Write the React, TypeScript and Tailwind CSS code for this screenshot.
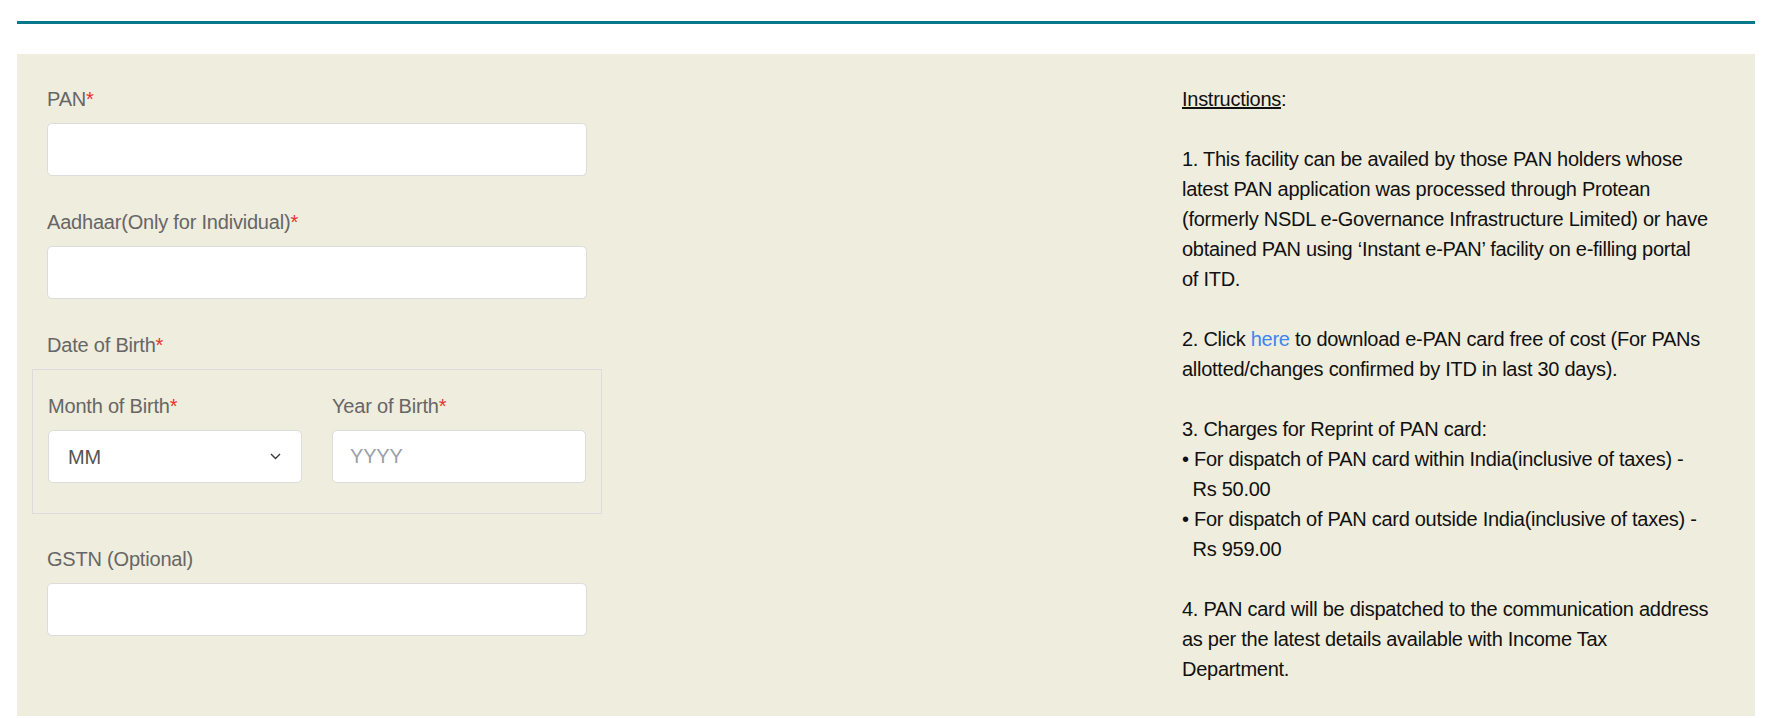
import React from "react";

const FONT = { fontFamily: '"Liberation Sans", Arial, sans-serif' };

function Label({ text, required }: { text: string; required?: boolean }) {
  return (
    <label className="block text-[20px] leading-[30px] tracking-[-0.2px] text-[#666666] mb-[9px]">
      {text}
      {required && <span className="text-[#e8322e]">*</span>}
    </label>
  );
}

function TextInput({ placeholder }: { placeholder?: string }) {
  return (
    <input
      type="text"
      placeholder={placeholder}
      className="block w-full h-[53px] bg-white border border-[#dcdcdc] rounded-[5px] pl-[17px] text-[20px] tracking-[-0.2px] text-[#555555] placeholder:text-[#9aa0a8] outline-none"
    />
  );
}

export default function App() {
  return (
    <div className="min-h-screen bg-white pt-[21px] px-[17px]" style={FONT}>
      <div className="h-[3px] bg-[#08788b]" />

      <div className="mt-[30px] bg-[#efeddd] px-[30px] pt-[30px] pb-[32px] flex justify-between">
        {/* Form */}
        <div className="w-[540px]">
          <div className="mb-[31px]">
            <Label text="PAN" required />
            <TextInput />
          </div>

          <div className="mb-[31px]">
            <Label text="Aadhaar(Only for Individual)" required />
            <TextInput />
          </div>

          <div className="mb-[30px]">
            <Label text="Date of Birth" required />
            <fieldset className="mx-[-15px] border border-[#dcdcdc] pt-[21px] pb-[30px] grid grid-cols-2">
              <div className="px-[15px]">
                <Label text="Month of Birth" required />
                <div className="relative">
                  <select className="block w-full h-[53px] bg-white border border-[#dcdcdc] rounded-[5px] pl-[19px] text-[20px] tracking-[-0.2px] text-[#555555] appearance-none outline-none">
                    <option>MM</option>
                  </select>
                  <svg
                    className="absolute right-[21px] top-[23px] pointer-events-none"
                    width="11"
                    height="7"
                    viewBox="0 0 11 7"
                    fill="none"
                  >
                    <path d="M1 1l4.5 4.5L10 1" stroke="#3a3a3a" strokeWidth="1.4" />
                  </svg>
                </div>
              </div>
              <div className="px-[15px]">
                <Label text="Year of Birth" required />
                <TextInput placeholder="YYYY" />
              </div>
            </fieldset>
          </div>

          <div>
            <Label text="GSTN (Optional)" />
            <TextInput />
          </div>
        </div>

        {/* Instructions */}
        <div className="w-[543px] whitespace-nowrap text-[20px] leading-[30px] tracking-[-0.27px] text-[#111111]">
          <span className="underline">Instructions</span>:
          <br />
          <br />
          1. This facility can be availed by those PAN holders whose
          <br />
          latest PAN application was processed through Protean
          <br />
          (formerly NSDL e-Governance Infrastructure Limited) or have
          <br />
          obtained PAN using ‘Instant e-PAN’ facility on e-filling portal
          <br />
          of ITD.
          <br />
          <br />
          2. Click{" "}
          <a href="#" className="text-[#3d85f2]">
            here
          </a>{" "}
          to download e-PAN card free of cost (For PANs
          <br />
          allotted/changes confirmed by ITD in last 30 days).
          <br />
          <br />
          3. Charges for Reprint of PAN card:
          <br />• For dispatch of PAN card within India(inclusive of taxes) -
          <br />
          {"\u00a0\u00a0"}Rs 50.00
          <br />• For dispatch of PAN card outside India(inclusive of taxes) -
          <br />
          {"\u00a0\u00a0"}Rs 959.00
          <br />
          <br />
          4. PAN card will be dispatched to the communication address
          <br />
          as per the latest details available with Income Tax
          <br />
          Department.
        </div>
      </div>
    </div>
  );
}
